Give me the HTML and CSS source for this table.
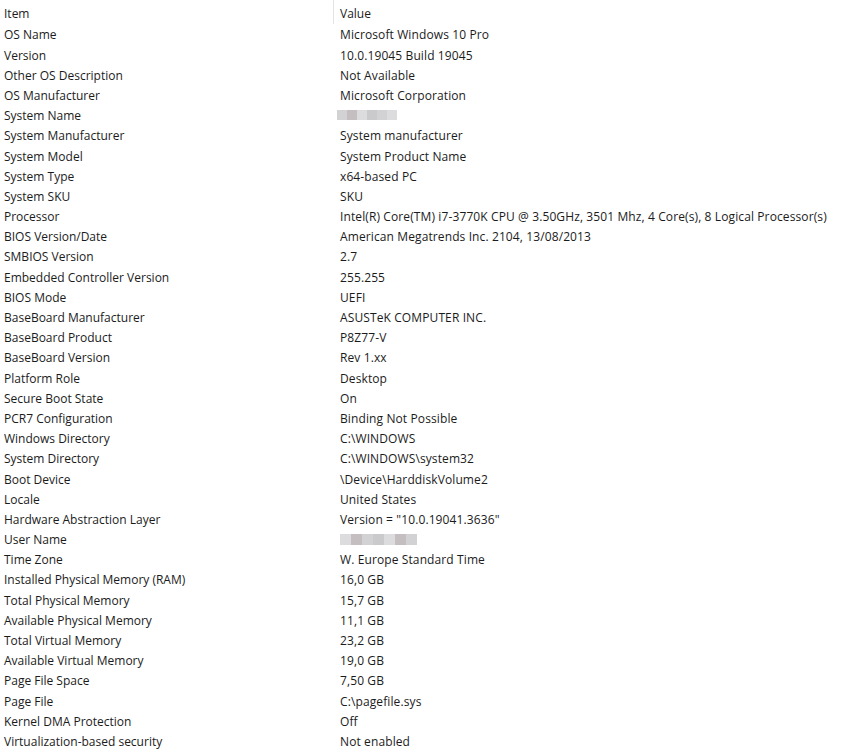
FILE: index.html
```html
<!DOCTYPE html>
<html>
<head>
<meta charset="utf-8">
<link rel="stylesheet" href="styles.css">
</head>
<body>
<div class="list">
  <div class="header">
    <div class="hcell item">Item</div>
    <div class="hcell value">Value</div>
  </div>
  <div class="row"><div class="c1">OS Name</div><div class="c2">Microsoft Windows 10 Pro</div></div>
  <div class="row"><div class="c1">Version</div><div class="c2">10.0.19045 Build 19045</div></div>
  <div class="row"><div class="c1">Other OS Description</div><div class="c2">Not Available</div></div>
  <div class="row"><div class="c1">OS Manufacturer</div><div class="c2">Microsoft Corporation</div></div>
  <div class="row"><div class="c1">System Name</div><div class="c2"><span class="blur b1"><i class="p a"></i><i class="p b"></i><i class="p c"></i><i class="p d"></i><i class="p a"></i><i class="p c"></i></span></div></div>
  <div class="row"><div class="c1">System Manufacturer</div><div class="c2">System manufacturer</div></div>
  <div class="row"><div class="c1">System Model</div><div class="c2">System Product Name</div></div>
  <div class="row"><div class="c1">System Type</div><div class="c2">x64-based PC</div></div>
  <div class="row"><div class="c1">System SKU</div><div class="c2">SKU</div></div>
  <div class="row"><div class="c1">Processor</div><div class="c2">Intel(R) Core(TM) i7-3770K CPU @ 3.50GHz, 3501 Mhz, 4 Core(s), 8 Logical Processor(s)</div></div>
  <div class="row"><div class="c1">BIOS Version/Date</div><div class="c2">American Megatrends Inc. 2104, 13/08/2013</div></div>
  <div class="row"><div class="c1">SMBIOS Version</div><div class="c2">2.7</div></div>
  <div class="row"><div class="c1">Embedded Controller Version</div><div class="c2">255.255</div></div>
  <div class="row"><div class="c1">BIOS Mode</div><div class="c2">UEFI</div></div>
  <div class="row"><div class="c1">BaseBoard Manufacturer</div><div class="c2">ASUSTeK COMPUTER INC.</div></div>
  <div class="row"><div class="c1">BaseBoard Product</div><div class="c2">P8Z77-V</div></div>
  <div class="row"><div class="c1">BaseBoard Version</div><div class="c2">Rev 1.xx</div></div>
  <div class="row"><div class="c1">Platform Role</div><div class="c2">Desktop</div></div>
  <div class="row"><div class="c1">Secure Boot State</div><div class="c2">On</div></div>
  <div class="row"><div class="c1">PCR7 Configuration</div><div class="c2">Binding Not Possible</div></div>
  <div class="row"><div class="c1">Windows Directory</div><div class="c2">C:\WINDOWS</div></div>
  <div class="row"><div class="c1">System Directory</div><div class="c2">C:\WINDOWS\system32</div></div>
  <div class="row"><div class="c1">Boot Device</div><div class="c2">\Device\HarddiskVolume2</div></div>
  <div class="row"><div class="c1">Locale</div><div class="c2">United States</div></div>
  <div class="row"><div class="c1">Hardware Abstraction Layer</div><div class="c2">Version = "10.0.19041.3636"</div></div>
  <div class="row"><div class="c1">User Name</div><div class="c2"><span class="blur b2"><i class="p c"></i><i class="p b"></i><i class="p a"></i><i class="p d"></i><i class="p c"></i><i class="p b"></i><i class="p a"></i></span></div></div>
  <div class="row"><div class="c1">Time Zone</div><div class="c2">W. Europe Standard Time</div></div>
  <div class="row"><div class="c1">Installed Physical Memory (RAM)</div><div class="c2">16,0 GB</div></div>
  <div class="row"><div class="c1">Total Physical Memory</div><div class="c2">15,7 GB</div></div>
  <div class="row"><div class="c1">Available Physical Memory</div><div class="c2">11,1 GB</div></div>
  <div class="row"><div class="c1">Total Virtual Memory</div><div class="c2">23,2 GB</div></div>
  <div class="row"><div class="c1">Available Virtual Memory</div><div class="c2">19,0 GB</div></div>
  <div class="row"><div class="c1">Page File Space</div><div class="c2">7,50 GB</div></div>
  <div class="row"><div class="c1">Page File</div><div class="c2">C:\pagefile.sys</div></div>
  <div class="row"><div class="c1">Kernel DMA Protection</div><div class="c2">Off</div></div>
  <div class="row"><div class="c1">Virtualization-based security</div><div class="c2">Not enabled</div></div>
</div>
</body>
</html>
```

FILE: styles.css
```css
html, body {
  margin: 0;
  padding: 0;
  background: #ffffff;
}
body {
  font-family: "Open Sans", "Noto Sans", sans-serif;
  font-size: 12px;
  color: #1b1b1b;
  overflow: hidden;
}
.list {
  display: flex;
  flex-direction: column;
  padding-top: 1.5px;
}
.header {
  display: flex;
  height: 23.9px;
  align-items: flex-start;
  margin-top: -1.5px;
  padding-top: 1.5px;
}
.hcell {
  line-height: 24px;
  height: 22px;
  padding-top: 0.5px;
}
.item {
  width: 329px;
  padding-left: 4px;
}
.value {
  border-left: 1px solid #e3e3e3;
  padding-left: 6px;
  margin-top: -1.5px;
  padding-top: 2px;
}
.row {
  display: flex;
  height: 20.2px;
  line-height: 20px;
  white-space: nowrap;
}
.c1 {
  width: 336px;
  padding-left: 4px;
  box-sizing: border-box;
}
.c2 {
  padding-left: 4px;
  letter-spacing: 0.11px;
}
.blur {
  display: inline-flex;
  vertical-align: middle;
  height: 10px;
  margin-top: -3px;
}
.b1 { margin-left: -3px; }
.b1 .p { width: 10px; }
.b2 { margin-left: 0; height: 11px; }
.b2 .p { width: 11px; }
.p { display: block; height: 100%; }
.p.a { background: #d2d2d4; }
.p.b { background: #c4bec1; }
.p.c { background: #dcdcde; }
.p.d { background: #cacacd; }
```
